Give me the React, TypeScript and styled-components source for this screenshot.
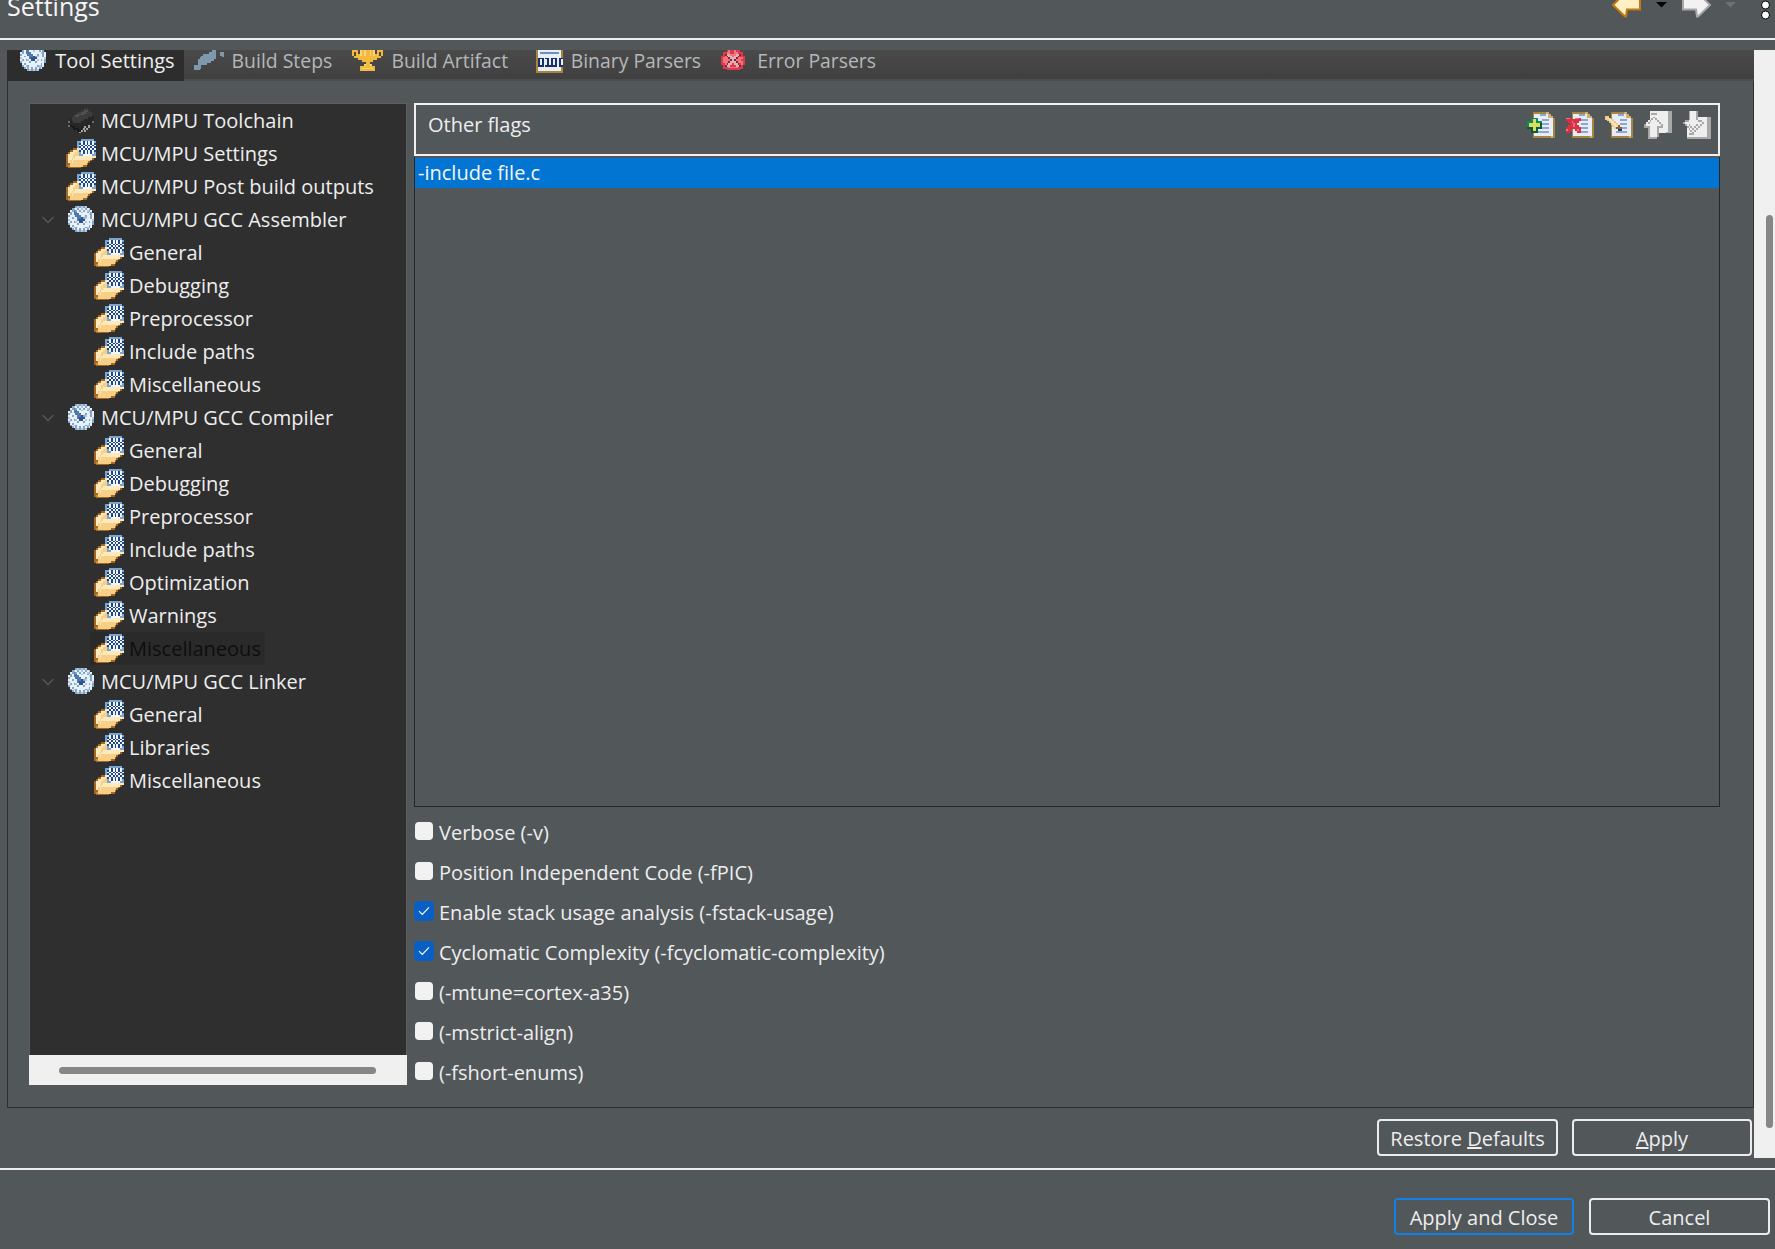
import React from "react";
import styled, { createGlobalStyle } from "styled-components";

const Global = createGlobalStyle`
  html, body { margin: 0; padding: 0; background: #52575a; }
  body { font-family: "Open Sans", "Noto Sans", "Liberation Sans", sans-serif; overflow: hidden; }
`;

const FONT_SIZE = 20;

type Palette = Record<string, string>;

const compose = (base: string[], over: string[], ox: number, oy: number) =>
  base.map((row, y) => {
    const o = over[y - oy];
    if (!o) return row;
    const chars = row.split("");
    o.split("").forEach((c, i) => {
      if (c !== ".") chars[ox + i] = c;
    });
    return chars.join("");
  });

const Pixels: React.FC<{ rows: string[]; palette: Palette; px: number; className?: string }> = ({ rows, palette, px, className }) => {
  const cols = Math.max(...rows.map((r) => r.length));
  return (
    <svg className={className} width={cols * px} height={rows.length * px} viewBox={`0 0 ${cols} ${rows.length}`} shapeRendering="crispEdges">
      {rows.flatMap((row, y) =>
        row.split("").map((c, x) =>
          palette[c] ? <rect key={`${x}-${y}`} x={x} y={y} width={1.02} height={1.02} fill={palette[c]} /> : null
        )
      )}
    </svg>
  );
};

const folderPal: Palette = { o: "#a5671f", y: "#fee9bd", l: "#f8cf86", w: "#f2f5fa", b: "#1f4684", m: "#7aa5cf", c: "#c98f3f" };
const FOLDER = [
  "........mmmmmmm.",
  "......mmwbwbwbwm",
  "......mbwbwbwbwb",
  "......mwbwbwbwbw",
  "......mbwbwbwbwb",
  "....ooywbwbwbwbw",
  "..ooyylbwbwbwbwb",
  ".oyyyllmwbwbwbwm",
  "oyyylllmmwwwwwmm",
  "oyyylyyyyyyyyyyy",
  "oyylyyyyyyyyyyo.",
  "oylylllllllllo..",
  "oylyllllllllo...",
  "oolllllllllo....",
  "ocllllllloo.....",
  ".ooooooo........",
];

const gearPal: Palette = { m: "#7fa6cc", w: "#eaf0f7", b: "#2a5590", g: "#b3c6db", n: "#4f78ad" };
const GEAR = [
  "....mgmgmg....",
  "..mgwmwgwmwg..",
  ".wmnmwmwmwgmw.",
  ".mwnnwwgwwmwm.",
  "wmwnnnwwwwwgmw",
  "mwwwnnnwwmwwmw",
  "wwmwwnnbmgwwmw",
  "gwwwwnbbbwwwwg",
  "wmwmgwbbwgwmwm",
  "mwwwwmwwmwwwwm",
  ".wmwwwwwwwwmw.",
  ".mwgmwwwwmgmw.",
  "..mwmwmwmwmw..",
  "....mgmgmg....",
];

const chipPal: Palette = { e: "#3c3c3c", f: "#505050", d: "#262626", k: "#1a1a1a", g: "#a2a2a2", h: "#6a6a6a" };
const CHIP = [
  "..........ee....",
  "........eeffe...",
  "......eefffeee..",
  ".....effffeeeee.",
  "....effeeeeeeed.",
  "...eeeeeeeeeddd.",
  "..deeeeeeeddddd.",
  ".hddeeeeddddddh.",
  "..dddddddddddd..",
  ".hkdddddddddg...",
  "...kkdddddg.g...",
  "....kkkddg.g....",
  "......kkg.g.....",
  ".......g........",
];

const docPal: Palette = {
  g: "#a8853e", G: "#d0b06c", p: "#e6edf9", l: "#8fa7cf",
  e: "#12875a", d: "#0a5c33", y: "#d9dc63",
  r: "#dd2f42", R: "#ef7079",
  t: "#ecc98e", T: "#f8e4bc", b: "#8a6228", n: "#1d3f75",
  W: "#eeeeee", s: "#a8a8a8",
};
const DOC = [
  "...gggggggGG...",
  "...gppplllpGG..",
  "...gpppppppGGG.",
  "...gppppppppppg",
  "...gppppllllppg",
  "...gppppppppppg",
  "...gppppllllppg",
  "...gppppppppppg",
  "...gppppllllppg",
  "...gppppppppppg",
  "...gppllllllppg",
  "...gppppppppppg",
  "...gppppppppppg",
  "...ggggggggggGg",
];
const PLUS = ["..eeee..", "..eyye..", "eeeyyeee", "eyyyyyyd", "eyyyyyyd", "dddyyddd", "..dyyd..", "..dddd.."];
const CROSS = ["RRr..RRr", "rrrrrrrr", ".rrRrrr.", "..rrRr..", ".rrrRrr.", "rrrrrrrr", "Rrr..rRr", "rr....rr"];
const PENCIL = ["tt.......", "tTt......", ".tTTt....", "..tTTt...", "...tTTt..", "....tTTb.", ".....tbbb", ".......nn"];

const UP = [
  "...WWWWWWWWWWss",
  "...WsssWWWWWWss",
  "...WWWWWWWWWWss",
  "...WWsWWWWWWWss",
  "...WsWsWWWWWWss",
  "..WsWWWsWWWWWss",
  ".WsWWWWWsWWWWss",
  "sWWWWWWWWsWWWss",
  "sssWWWWsssWWWss",
  "..sWWWWsWWWWWss",
  "..sWWWWsWWWWWss",
  "..sWWWWsWWWWsss",
  "..sWWWWs.......",
  "..sWWWWs.......",
  "..sssss........",
];
const DOWN = [
  "...sWWWs.......",
  "...sWWWs.......",
  "...sWWWs.......",
  "...sWWWsWWWWWss",
  "...sWWWsWWWWWss",
  ".ssWWWWWssWWWss",
  "sWWWWWWWWWsWWss",
  ".sWsWWWsWsWWWss",
  "..sWsWsWsWWWWss",
  "..WsWsWsWWWWWss",
  "..WWsWsWWWWWWss",
  "..WWWsWWWWWWWss",
  "..WsssWWWWWWWss",
  "..WWWWWWWWWWWss",
  "..sssssssssssss",
];

const stepsPal: Palette = { f: "#7e98ac" };
const STEPS = [
  "..........ff....",
  "........ffff..ff",
  ".....fffffff..ff",
  "....ffffffff...f",
  "...fffffffff....",
  "..fffffffff.....",
  "..fffffff.......",
  "..fffff.........",
  "ffff............",
  "ffff............",
  "fff.............",
];

const trophyPal: Palette = { G: "#f2b93c", y: "#f8d57a" };
const TROPHY = [
  "GGG.yGyGGyGy.GGG",
  "G.G.yGyGGyGy.G.G",
  "G.GGyGyGGyGyGG.G",
  ".GGGGGGGGGGGGGG.",
  "...GGGGGGGGGG...",
  ".....GGGGGG.....",
  ".......GG.......",
  "......yGGy......",
  "....GGGGGGGG....",
  "....GyyyyyyG....",
  "....GGGGGGGG....",
];

const binPal: Palette = { g: "#a8853e", p: "#e8eef6", n: "#6f8fbe", B: "#1b2f66" };
const BINARY = [
  "gppppppppppppg",
  "gpnnnnnnnnnnpg",
  "gppppppppppppg",
  "gppppppppppppg",
  "gBBBpBBpBBBpBB",
  "gBpBppBpBpBpBp",
  "gBpBppBpBpBpBp",
  "gBpBppBpBpBpBp",
  "gBBBpBBBBBBpBB",
  "gppppppppppppg",
  "gppppppppppppg",
  "gggggggggggggg",
];

const errPal: Palette = { r: "#dc3a4c", R: "#ef747c", d: "#8c2030", w: "#dcb4b8" };
const ERROR = [
  "...rRrrRrr...",
  ".rrRRrrRRrrr.",
  ".rdwwRRRwwdr.",
  "rrRdwwRwwdrrr",
  "rRRRdwwwdRRRr",
  "rRRRRdwdRRRrr",
  "rRRRdwwwdRRRr",
  "rrRdwwrwwdrRr",
  ".rdwwrrrwwdr.",
  ".rrrRRRRRrrr.",
  "...rrrrrrr...",
];

const Page = styled.div`
  width: 1775px;
  height: 1249px;
  overflow: hidden;
  background: #52575a;
  color: #eeeeee;
  font-size: ${FONT_SIZE}px;
  display: flex;
  flex-direction: column;
`;

const TitleBar = styled.header`
  height: 38px;
  flex: none;
  display: flex;
  justify-content: space-between;
  align-items: flex-start;
  padding: 0 4px 0 7px;
  overflow: hidden;
`;

const Title = styled.h1`
  margin: -12px 0 0;
  font-size: 25px;
  line-height: 36px;
  font-weight: 500;
  color: #f6f6f6;
`;

const NavGroup = styled.div`
  display: flex;
  align-items: flex-start;
`;

const NavArrow = styled.svg<{ $left: number }>`
  display: block;
  margin-left: ${(p) => p.$left}px;
`;

const Rule = styled.hr`
  flex: none;
  margin: 0;
  border: 0;
  height: 2px;
  background: #eeeeee;
`;

const Workspace = styled.div`
  flex: none;
  height: 1108px;
  margin-top: 10px;
  display: flex;
`;

const Main = styled.div`
  flex: 1;
  min-width: 0;
  display: flex;
  flex-direction: column;
  padding-left: 7px;
`;

const TabBar = styled.nav`
  flex: none;
  height: 31px;
  display: flex;
  background: linear-gradient(#4a4a4a, #3f3f3f);
  box-shadow: inset 0 -2px 0 #4a4c4e;
`;

const Tab = styled.div<{ $active?: boolean; $pad: number; $gap: number; $w?: number }>`
  flex: none;
  display: flex;
  align-items: flex-start;
  gap: ${(p) => p.$gap}px;
  height: 31px;
  padding-left: ${(p) => p.$pad}px;
  width: ${(p) => (p.$w ? `${p.$w}px` : "auto")};
  background: ${(p) => (p.$active ? "#2d2d2d" : "transparent")};
  color: ${(p) => (p.$active ? "#f0f0f0" : "#b3b8bb")};
  font-size: ${(p) => (p.$active ? 20 : 19.4)}px;
  box-sizing: border-box;
`;

const TabLabel = styled.span`
  line-height: 22px;
  white-space: nowrap;
`;

const TabPanel = styled.section`
  flex: none;
  height: 1027px;
  box-sizing: border-box;
  display: flex;
  gap: 7px;
  padding: 22px 0 0 21px;
  border-left: 1px solid #2c3033;
  border-bottom: 1.5px solid #2c3033;
  border-right: 1px solid #2c3033;
`;

const TreeFrame = styled.div`
  flex: none;
  width: 378px;
  height: 982px;
  display: flex;
  flex-direction: column;
  background: #2f2f2f;
  box-shadow: inset 0 0 0 1px #5c5f61;
`;

const Tree = styled.ul`
  flex: 1;
  margin: 0;
  padding: 1px 0 0;
  list-style: none;
`;

const TreeRow = styled.li<{ $depth: number }>`
  height: 33px;
  display: flex;
  align-items: center;
  padding-left: ${(p) => (p.$depth ? 61 : 13)}px;
`;

const Twist = styled.span`
  flex: none;
  width: 12px;
  height: 12px;
  margin-right: 8px;
  display: flex;
  align-items: center;
  color: #585858;
`;

const RowBody = styled.span<{ $selected?: boolean }>`
  display: flex;
  align-items: center;
  gap: 5px;
  height: 33px;
  padding: 0 4px;
  background: ${(p) => (p.$selected ? "#2a2a2a" : "transparent")};
  color: ${(p) => (p.$selected ? "#0e0e0e" : "#eeeeee")};
  white-space: nowrap;
`;

const TreeIconSlot = styled.span`
  flex: none;
  width: 30px;
  display: flex;
  align-items: center;
  justify-content: center;
`;

const HScroll = styled.div`
  flex: none;
  height: 30px;
  background: #f0f0f0;
  display: flex;
  align-items: center;
  padding-left: 30px;
`;

const HThumb = styled.div`
  width: 317px;
  height: 7px;
  border-radius: 4px;
  background: #868686;
`;

const OptionsColumn = styled.div`
  flex: none;
  width: 1306px;
  display: flex;
  flex-direction: column;
`;

const FlagsHeader = styled.div`
  height: 53px;
  box-sizing: border-box;
  border: 2px solid #f0f0f0;
  display: flex;
  align-items: center;
  justify-content: space-between;
  padding: 0 7px 11px 12px;
`;

const FlagsTools = styled.div`
  display: flex;
  align-items: center;
  gap: 11px;
  margin-top: 2px;
`;

const FlagsList = styled.div`
  height: 650px;
  box-sizing: border-box;
  margin-top: 1px;
  border: 1px solid #23272a;
  border-top: 0;
`;

const FlagItem = styled.div`
  height: 30px;
  line-height: 30px;
  margin-top: 1px;
  padding-left: 3px;
  background: #0274d2;
  color: #f6f6f6;
`;

const Options = styled.div`
  margin-top: 5px;
  display: flex;
  flex-direction: column;
`;

const Option = styled.label`
  height: 40px;
  display: flex;
  align-items: center;
  gap: 6px;
  white-space: nowrap;
`;

const CheckBox = styled.span<{ $checked?: boolean }>`
  flex: none;
  width: ${(p) => (p.$checked ? 20 : 18)}px;
  height: ${(p) => (p.$checked ? 20 : 18)}px;
  margin: ${(p) => (p.$checked ? "0 -1px 2px 0" : "0 0 2px 1px")};
  border-radius: 4px;
  background: ${(p) => (p.$checked ? "#0a5fc4" : "#f2f2f2")};
  display: flex;
  align-items: center;
  justify-content: center;
`;

const PanelButtons = styled.div`
  flex: none;
  height: 50px;
  display: flex;
  justify-content: flex-end;
  align-items: flex-start;
  gap: 14px;
  padding: 11px 2px 0 0;
  box-sizing: border-box;
`;

const Btn = styled.button<{ $primary?: boolean; $w: number }>`
  width: ${(p) => p.$w}px;
  height: 37px;
  padding: 1px 0 0;
  background: transparent;
  border: 2px solid ${(p) => (p.$primary ? "#1280e6" : "#ececec")};
  border-radius: 4px;
  font: inherit;
  color: #eeeeee;
  text-align: center;
`;

const VScroll = styled.aside`
  flex: none;
  width: 21px;
  background: #f0f0f0;
  padding: 165px 2px 0 12px;
  box-sizing: border-box;
`;

const VThumb = styled.div`
  width: 7px;
  height: 913px;
  border-radius: 4px;
  background: #868686;
`;

const FooterRule = styled(Rule)`
  margin-top: 10px;
`;

const Footer = styled.footer`
  flex: none;
  display: flex;
  justify-content: flex-end;
  gap: 15px;
  padding: 28px 5px 0 0;
`;

const Chevron = () => (
  <svg width="12" height="8" viewBox="0 0 12 8" fill="none" stroke="currentColor" strokeWidth="1.3">
    <path d="M0.5 1 L6 6.5 L11.5 1" />
  </svg>
);

const Check = () => (
  <svg width="12" height="10" viewBox="0 0 12 10" fill="none" stroke="#ffffff" strokeWidth="1.1">
    <path d="M1 5.2 L4.3 8.4 L11 1.4" />
  </svg>
);

type Node = { label: string; depth: number; kind: "chip" | "folder" | "gear"; open?: boolean; selected?: boolean };

const child = (label: string, selected = false): Node => ({ label, depth: 1, kind: "folder", selected });

const nodes: Node[] = [
  { label: "MCU/MPU Toolchain", depth: 0, kind: "chip" },
  { label: "MCU/MPU Settings", depth: 0, kind: "folder" },
  { label: "MCU/MPU Post build outputs", depth: 0, kind: "folder" },
  { label: "MCU/MPU GCC Assembler", depth: 0, kind: "gear", open: true },
  child("General"),
  child("Debugging"),
  child("Preprocessor"),
  child("Include paths"),
  child("Miscellaneous"),
  { label: "MCU/MPU GCC Compiler", depth: 0, kind: "gear", open: true },
  child("General"),
  child("Debugging"),
  child("Preprocessor"),
  child("Include paths"),
  child("Optimization"),
  child("Warnings"),
  child("Miscellaneous", true),
  { label: "MCU/MPU GCC Linker", depth: 0, kind: "gear", open: true },
  child("General"),
  child("Libraries"),
  child("Miscellaneous"),
];

const NodeIcon: React.FC<{ kind: Node["kind"] }> = ({ kind }) => {
  if (kind === "chip") return <Pixels rows={CHIP} palette={chipPal} px={1.85} />;
  if (kind === "gear") return <Pixels rows={GEAR} palette={gearPal} px={1.87} />;
  return <Pixels rows={FOLDER} palette={folderPal} px={1.87} />;
};

const options: [string, boolean][] = [
  ["Verbose (-v)", false],
  ["Position Independent Code (-fPIC)", false],
  ["Enable stack usage analysis (-fstack-usage)", true],
  ["Cyclomatic Complexity (-fcyclomatic-complexity)", true],
  ["(-mtune=cortex-a35)", false],
  ["(-mstrict-align)", false],
  ["(-fshort-enums)", false],
];

export default function App() {
  return (
    <Page>
      <Global />
      <TitleBar>
        <Title>Settings</Title>
        <NavGroup>
          <NavArrow $left={0} width="30" height="18" viewBox="0 0 30 18">
            <path d="M1 5 L9 -3 L28 -3 L28 9.5 L15 9.5 L14 16.5 L13 16.5 Z" fill="#fff0c4" stroke="#c07a10" strokeWidth="2" />
          </NavArrow>
          <NavArrow $left={14} width="11" height="8" viewBox="0 0 11 8">
            <path d="M0 2 H11 L5.5 7.5 Z" fill="#000000" />
          </NavArrow>
          <NavArrow $left={15} width="30" height="18" viewBox="0 0 30 18">
            <path d="M28 5 L20 -3 L1 -3 L1 9.5 L14 9.5 L15 16.5 L16 16.5 Z" fill="#f2f2f2" stroke="#a8a8a8" strokeWidth="2" />
          </NavArrow>
          <NavArrow $left={13} width="11" height="8" viewBox="0 0 11 8">
            <path d="M0 2 H11 L5.5 7.5 Z" fill="#6d7173" />
          </NavArrow>
          <NavArrow $left={24} width="11" height="20" viewBox="0 0 11 20">
            <circle cx="5.5" cy="5" r="4" fill="#fff" stroke="#000" strokeWidth="1" />
            <circle cx="5.5" cy="15" r="4" fill="#fff" stroke="#000" strokeWidth="1" />
          </NavArrow>
        </NavGroup>
      </TitleBar>
      <Rule />
      <Workspace>
        <Main>
          <TabBar>
            <Tab $active $pad={13} $gap={9} $w={177}>
              <Pixels rows={GEAR.slice(3)} palette={gearPal} px={1.87} />
              <TabLabel>Tool Settings</TabLabel>
            </Tab>
            <Tab $pad={10} $gap={8}>
              <Pixels rows={STEPS} palette={stepsPal} px={1.85} />
              <TabLabel>Build Steps</TabLabel>
            </Tab>
            <Tab $pad={20} $gap={8}>
              <Pixels rows={TROPHY} palette={trophyPal} px={1.95} />
              <TabLabel>Build Artifact</TabLabel>
            </Tab>
            <Tab $pad={28} $gap={8}>
              <Pixels rows={BINARY} palette={binPal} px={1.9} />
              <TabLabel>Binary Parsers</TabLabel>
            </Tab>
            <Tab $pad={20} $gap={12}>
              <Pixels rows={ERROR} palette={errPal} px={1.85} />
              <TabLabel>Error Parsers</TabLabel>
            </Tab>
          </TabBar>
          <TabPanel>
            <TreeFrame>
              <Tree>
                {nodes.map((n, i) => (
                  <TreeRow key={i} $depth={n.depth}>
                    {n.depth === 0 && <Twist>{n.open && <Chevron />}</Twist>}
                    <RowBody $selected={n.selected}>
                      <TreeIconSlot>
                        <NodeIcon kind={n.kind} />
                      </TreeIconSlot>
                      {n.label}
                    </RowBody>
                  </TreeRow>
                ))}
              </Tree>
              <HScroll>
                <HThumb />
              </HScroll>
            </TreeFrame>
            <OptionsColumn>
              <FlagsHeader>
                <span>Other flags</span>
                <FlagsTools>
                  <Pixels rows={compose(DOC, PLUS, 0, 3)} palette={docPal} px={1.87} />
                  <Pixels rows={compose(DOC, CROSS, 0, 3)} palette={docPal} px={1.87} />
                  <Pixels rows={compose(DOC, PENCIL, 0, 2)} palette={docPal} px={1.87} />
                  <Pixels rows={UP} palette={docPal} px={1.87} />
                  <Pixels rows={DOWN} palette={docPal} px={1.87} />
                </FlagsTools>
              </FlagsHeader>
              <FlagsList>
                <FlagItem>-include file.c</FlagItem>
              </FlagsList>
              <Options>
                {options.map(([label, on]) => (
                  <Option key={label}>
                    <CheckBox $checked={on}>{on && <Check />}</CheckBox>
                    {label}
                  </Option>
                ))}
              </Options>
            </OptionsColumn>
          </TabPanel>
          <PanelButtons>
            <Btn $w={181}>
              Restore <u>D</u>efaults
            </Btn>
            <Btn $w={180}>
              <u>A</u>pply
            </Btn>
          </PanelButtons>
        </Main>
        <VScroll>
          <VThumb />
        </VScroll>
      </Workspace>
      <FooterRule />
      <Footer>
        <Btn $primary $w={180}>Apply and Close</Btn>
        <Btn $w={181}>Cancel</Btn>
      </Footer>
    </Page>
  );
}
